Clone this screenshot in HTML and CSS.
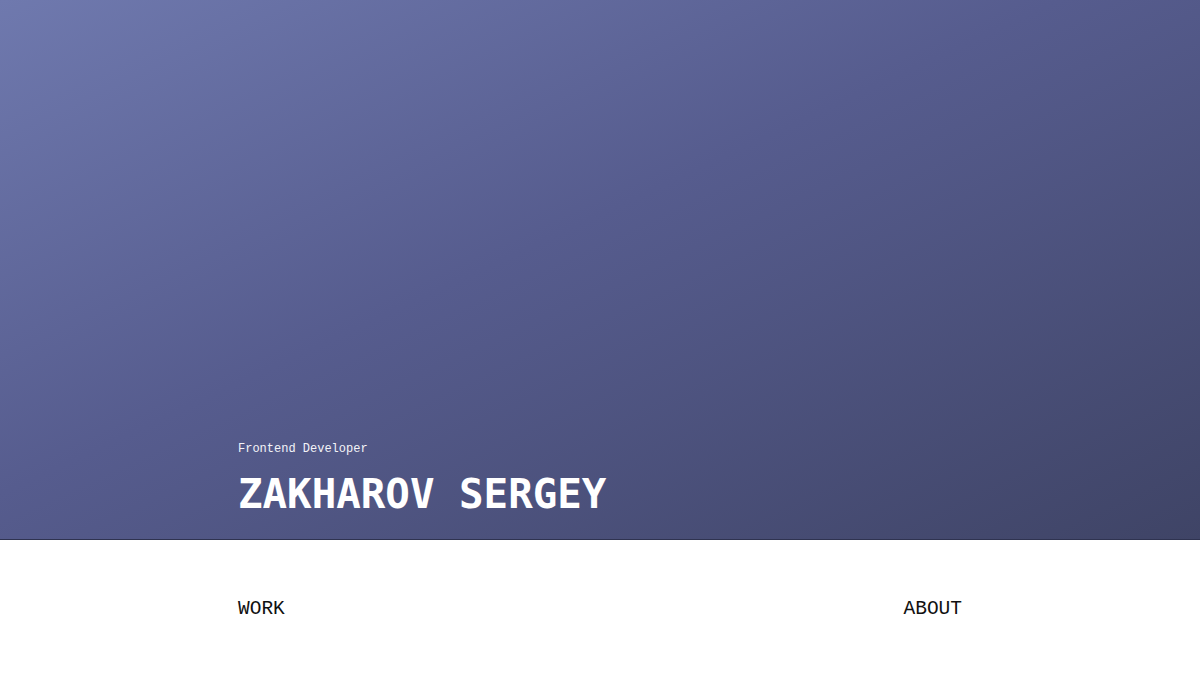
FILE: index.html
```html
<!DOCTYPE html>
<html lang="en">
    <head>
        <meta charset="UTF-8">
        <title>Zakharov Sergey</title>
        <link rel="stylesheet" href="styles.css">
    </head>

    <body>

        <header class="hero">
            <div class="wrap hero_inner">
                <p class="role">Frontend Developer</p>
                <h1 class="name">ZAKHAROV SERGEY</h1>
            </div>
        </header>

        <nav class="wrap menu">
            <a class="menu_link" href="#work">WORK</a>
            <a class="menu_link" href="#about">ABOUT</a>
        </nav>

    </body>
</html>
```

FILE: styles.css
```css
body {
    margin: 0;
    background-color: #ffffff;
    font-family: "Liberation Mono", "DejaVu Sans Mono", monospace;
    overflow: hidden; /* Hide scrollbars */
}

.wrap {
    width: 724px;
    margin: 0 auto;
}

.hero {
    height: 539px;
    display: flex;
    align-items: flex-end;
    background: linear-gradient(155deg, #6f79ae 0%, #565c8e 45%, #3f4466 100%);
    border-bottom: 1px solid #2f3350;
}

.hero_inner {
    padding-bottom: 21px;
}

.role {
    margin: 0 0 14px 0;
    font-size: 12px;
    color: #f4f4f8;
}

.name {
    margin: 0;
    font-family: "DejaVu Sans Mono", monospace;
    font-size: 40.8px;
    line-height: 48px;
    font-weight: bold;
    color: #ffffff;
}

.menu {
    display: flex;
    justify-content: space-between;
    padding-top: 58px;
}

.menu_link {
    font-size: 19.5px;
    color: #111111;
    text-decoration: none;
}
```
